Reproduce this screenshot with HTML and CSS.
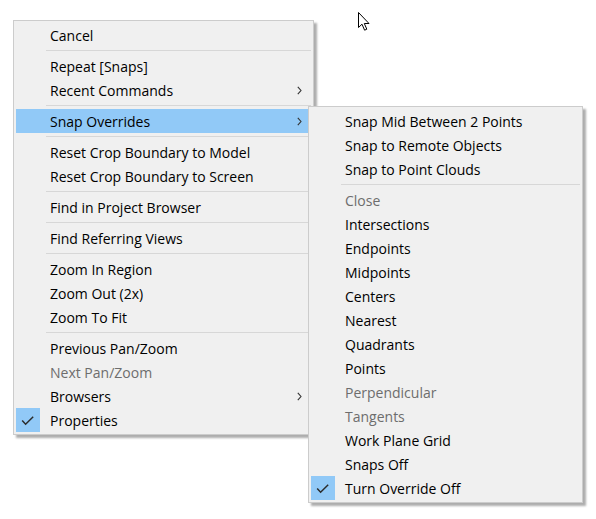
FILE: index.html
```html
<!DOCTYPE html>
<html>
<head>
<meta charset="utf-8">
<link rel="stylesheet" href="styles.css">
</head>
<body>
<div class="stage">
  <div class="menu main">
    <div class="item"><span class="icon"></span><span class="label">Cancel</span></div>
    <div class="sep"></div>
    <div class="item"><span class="icon"></span><span class="label">Repeat [Snaps]</span></div>
    <div class="item"><span class="icon"></span><span class="label">Recent Commands</span><svg class="arrow" width="5" height="9" viewBox="0 0 5 9"><path d="M0.8 0.8 L4 4.5 L0.8 8.2" fill="none" stroke="#333" stroke-width="1.1"/></svg></div>
    <div class="sep"></div>
    <div class="item active"><span class="icon"></span><span class="label">Snap Overrides</span><svg class="arrow" width="5" height="9" viewBox="0 0 5 9"><path d="M0.8 0.8 L4 4.5 L0.8 8.2" fill="none" stroke="#333" stroke-width="1.1"/></svg></div>
    <div class="sep"></div>
    <div class="item"><span class="icon"></span><span class="label">Reset Crop Boundary to Model</span></div>
    <div class="item"><span class="icon"></span><span class="label">Reset Crop Boundary to Screen</span></div>
    <div class="sep"></div>
    <div class="item"><span class="icon"></span><span class="label">Find in Project Browser</span></div>
    <div class="sep"></div>
    <div class="item"><span class="icon"></span><span class="label">Find Referring Views</span></div>
    <div class="sep"></div>
    <div class="item"><span class="icon"></span><span class="label">Zoom In Region</span></div>
    <div class="item"><span class="icon"></span><span class="label">Zoom Out (2x)</span></div>
    <div class="item"><span class="icon"></span><span class="label">Zoom To Fit</span></div>
    <div class="sep"></div>
    <div class="item"><span class="icon"></span><span class="label">Previous Pan/Zoom</span></div>
    <div class="item disabled"><span class="icon"></span><span class="label">Next Pan/Zoom</span></div>
    <div class="item"><span class="icon"></span><span class="label">Browsers</span><svg class="arrow" width="5" height="9" viewBox="0 0 5 9"><path d="M0.8 0.8 L4 4.5 L0.8 8.2" fill="none" stroke="#333" stroke-width="1.1"/></svg></div>
    <div class="item"><span class="icon checked"><svg width="24" height="24" viewBox="0 0 24 24"><path d="M6.2 12.6 L9.6 16.2 L17.2 8.8" fill="none" stroke="#2b2b2b" stroke-width="1.5"/></svg></span><span class="label">Properties</span></div>
  </div>

  <div class="menu sub">
    <div class="item"><span class="icon"></span><span class="label">Snap Mid Between 2 Points</span></div>
    <div class="item"><span class="icon"></span><span class="label">Snap to Remote Objects</span></div>
    <div class="item"><span class="icon"></span><span class="label">Snap to Point Clouds</span></div>
    <div class="sep"></div>
    <div class="item disabled"><span class="icon"></span><span class="label">Close</span></div>
    <div class="item"><span class="icon"></span><span class="label">Intersections</span></div>
    <div class="item"><span class="icon"></span><span class="label">Endpoints</span></div>
    <div class="item"><span class="icon"></span><span class="label">Midpoints</span></div>
    <div class="item"><span class="icon"></span><span class="label">Centers</span></div>
    <div class="item"><span class="icon"></span><span class="label">Nearest</span></div>
    <div class="item"><span class="icon"></span><span class="label">Quadrants</span></div>
    <div class="item"><span class="icon"></span><span class="label">Points</span></div>
    <div class="item disabled"><span class="icon"></span><span class="label">Perpendicular</span></div>
    <div class="item disabled"><span class="icon"></span><span class="label">Tangents</span></div>
    <div class="item"><span class="icon"></span><span class="label">Work Plane Grid</span></div>
    <div class="item"><span class="icon"></span><span class="label">Snaps Off</span></div>
    <div class="item"><span class="icon checked"><svg width="24" height="24" viewBox="0 0 24 24"><path d="M6.2 12.6 L9.6 16.2 L17.2 8.8" fill="none" stroke="#2b2b2b" stroke-width="1.5"/></svg></span><span class="label">Turn Override Off</span></div>
  </div>

  <svg class="cursor" width="13" height="20" viewBox="0 0 13 20">
    <path d="M0.5 0.5 L0.5 15.5 L4 12.2 L6.6 18.2 L8.8 17.2 L6.3 11.5 L11 11.5 Z" fill="#fff" stroke="#000" stroke-width="1" stroke-linejoin="miter"/>
  </svg>
</div>
</body>
</html>
```

FILE: styles.css
```css
html, body {
  margin: 0;
  padding: 0;
  background: #ffffff;
}

.stage {
  position: relative;
  width: 596px;
  height: 519px;
  overflow: hidden;
  font-family: "Open Sans", "Noto Sans", "Liberation Sans", sans-serif;
  font-size: 14px;
  color: #000;
}

.menu {
  box-sizing: border-box;
  background: #f0f0f0;
  border: 1px solid #cccccc;
  padding: 2px;
  box-shadow: 3px 3px 2px 0 rgba(0, 0, 0, 0.32);
}

.main {
  width: 301px;
  margin-left: 13px;
  margin-top: 20px;
}

.sub {
  position: absolute;
  left: 308px;
  top: 106px;
  width: 275px;
}

.item {
  display: flex;
  align-items: center;
  height: 24px;
  white-space: nowrap;
}

.item.active {
  background: #91c9f7;
}

.item.disabled {
  color: #6d6d6d;
}

.icon {
  flex: none;
  width: 24px;
  height: 24px;
}

.icon.checked {
  background: #91c9f7;
}

.icon svg {
  display: block;
}

.label {
  margin-left: 10px;
  margin-top: 2px;
  line-height: 24px;
}

.arrow {
  margin-left: auto;
  margin-right: 9px;
  display: block;
}

.sep {
  height: 1px;
  background: #d7d7d7;
  margin: 3px 0 3px 30px;
}

.cursor {
  position: absolute;
  left: 358px;
  top: 12px;
}
```
